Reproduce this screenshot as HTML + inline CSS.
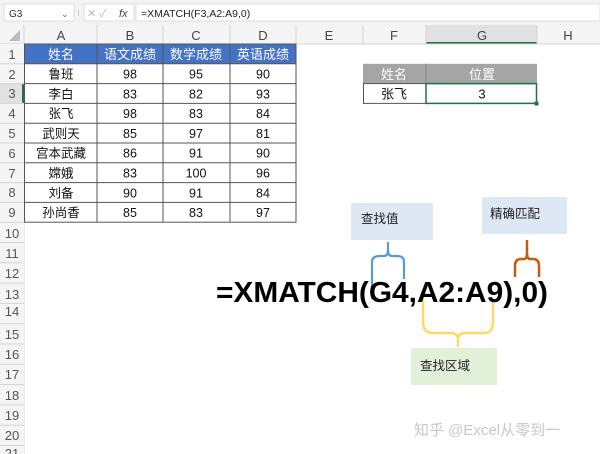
<!DOCTYPE html>
<html><head><meta charset="utf-8"><style>
body{margin:0;width:600px;height:454px;overflow:hidden;background:#fff}
svg{display:block}
text{font-family:"Liberation Sans","Noto Sans CJK SC",sans-serif}
</style></head><body>
<svg width="600" height="454" viewBox="0 0 600 454">
<rect x="0" y="0" width="600" height="25" fill="#f3f3f3"/>
<rect x="4" y="4" width="70" height="17" fill="#fff" stroke="#ddd"/>
<text x="9" y="17" font-size="10" fill="#333">G3</text>
<text x="61" y="17" font-size="9" fill="#666">⌄</text>
<text x="77" y="16" font-size="9" fill="#aaa">⁝</text>
<rect x="84" y="4" width="50" height="17" fill="#fff" stroke="#ddd"/>
<text x="87" y="17" font-size="11" fill="#bbb">✕ ✓</text>
<text x="119" y="17" font-size="11" font-style="italic" fill="#444" font-family="Liberation Serif,serif">fx</text>
<rect x="136" y="4" width="464" height="17" fill="#fff" stroke="#ddd"/>
<text x="141" y="17" font-size="10.5" fill="#222">=XMATCH(F3,A2:A9,0)</text>
<rect x="0" y="25" width="600" height="19" fill="#f5f5f5"/>
<rect x="426" y="25" width="111" height="19" fill="#e1e1e1"/>
<line x1="426" y1="43" x2="537" y2="43" stroke="#217346" stroke-width="2"/>
<line x1="0" y1="44" x2="600" y2="44" stroke="#d4d4d4"/>
<g stroke="#d4d4d4">
<line x1="24" y1="25" x2="24" y2="454"/><line x1="97" y1="25" x2="97" y2="44"/><line x1="163" y1="25" x2="163" y2="44"/><line x1="230" y1="25" x2="230" y2="44"/><line x1="296" y1="25" x2="296" y2="44"/><line x1="363" y1="25" x2="363" y2="44"/><line x1="426" y1="25" x2="426" y2="44"/><line x1="537" y1="25" x2="537" y2="44"/>
</g>
<polygon points="20,30 20,41 9,41" fill="#bbb"/>
<g font-size="13" fill="#444" text-anchor="middle">
<text x="61" y="40">A</text><text x="130" y="40">B</text><text x="196" y="40">C</text><text x="263" y="40">D</text><text x="329" y="40">E</text><text x="394" y="40">F</text><text x="482" y="40">G</text><text x="568" y="40">H</text>
</g>
<rect x="0" y="44" width="24" height="410" fill="#f5f5f5"/>
<rect x="0" y="83.6" width="24" height="19.8" fill="#e1e1e1"/>
<line x1="23" y1="83.6" x2="23" y2="103.4" stroke="#217346" stroke-width="2"/>
<g stroke="#d4d4d4">
<line x1="0" y1="63.8" x2="24" y2="63.8"/><line x1="0" y1="83.6" x2="24" y2="83.6"/><line x1="0" y1="103.4" x2="24" y2="103.4"/><line x1="0" y1="123.2" x2="24" y2="123.2"/><line x1="0" y1="143" x2="24" y2="143"/><line x1="0" y1="162.8" x2="24" y2="162.8"/><line x1="0" y1="182.6" x2="24" y2="182.6"/><line x1="0" y1="202.4" x2="24" y2="202.4"/><line x1="0" y1="222.2" x2="24" y2="222.2"/><line x1="0" y1="242.5" x2="24" y2="242.5"/><line x1="0" y1="262.8" x2="24" y2="262.8"/><line x1="0" y1="283.1" x2="24" y2="283.1"/><line x1="0" y1="303.4" x2="24" y2="303.4"/><line x1="0" y1="323.7" x2="24" y2="323.7"/><line x1="0" y1="344" x2="24" y2="344"/><line x1="0" y1="364.3" x2="24" y2="364.3"/><line x1="0" y1="384.6" x2="24" y2="384.6"/><line x1="0" y1="404.9" x2="24" y2="404.9"/><line x1="0" y1="425.2" x2="24" y2="425.2"/><line x1="0" y1="445.5" x2="24" y2="445.5"/>
</g>
<g font-size="13" fill="#555" text-anchor="middle">
<text x="12" y="59">1</text><text x="12" y="79">2</text><text x="12" y="98">3</text><text x="12" y="118">4</text><text x="12" y="138">5</text><text x="12" y="158">6</text><text x="12" y="178">7</text><text x="12" y="197">8</text><text x="12" y="217">9</text><text x="12" y="238">10</text><text x="12" y="258">11</text><text x="12" y="278">12</text><text x="12" y="299">13</text><text x="12" y="316">14</text><text x="12" y="339">15</text><text x="12" y="359">16</text><text x="12" y="379">17</text><text x="12" y="400">18</text><text x="12" y="420">19</text><text x="12" y="440">20</text><text x="12" y="458">21</text>
</g>
<rect x="24" y="44" width="272" height="19.8" fill="#4472c4"/>
<g stroke="#555" stroke-width="1" fill="none">
<rect x="24.5" y="44" width="271.5" height="178.2"/>
<line x1="97" y1="44" x2="97" y2="222"/><line x1="163" y1="44" x2="163" y2="222"/><line x1="230" y1="44" x2="230" y2="222"/>
<line x1="24" y1="63.8" x2="296" y2="63.8"/><line x1="24" y1="83.6" x2="296" y2="83.6"/><line x1="24" y1="103.4" x2="296" y2="103.4"/><line x1="24" y1="123.2" x2="296" y2="123.2"/><line x1="24" y1="143" x2="296" y2="143"/><line x1="24" y1="162.8" x2="296" y2="162.8"/><line x1="24" y1="182.6" x2="296" y2="182.6"/><line x1="24" y1="202.4" x2="296" y2="202.4"/>
</g>
<g font-size="13" fill="#fff" text-anchor="middle">
<text x="61" y="59">姓名</text><text x="130" y="59">语文成绩</text><text x="196" y="59">数学成绩</text><text x="263" y="59">英语成绩</text>
</g>
<g font-size="12.5" fill="#111" text-anchor="middle">
<text x="61" y="78.5">鲁班</text><text x="130" y="78.5">98</text><text x="196" y="78.5">95</text><text x="263" y="78.5">90</text>
<text x="61" y="98.3">李白</text><text x="130" y="98.3">83</text><text x="196" y="98.3">82</text><text x="263" y="98.3">93</text>
<text x="61" y="118.1">张飞</text><text x="130" y="118.1">98</text><text x="196" y="118.1">83</text><text x="263" y="118.1">84</text>
<text x="61" y="137.9">武则天</text><text x="130" y="137.9">85</text><text x="196" y="137.9">97</text><text x="263" y="137.9">81</text>
<text x="61" y="157.7">宫本武藏</text><text x="130" y="157.7">86</text><text x="196" y="157.7">91</text><text x="263" y="157.7">90</text>
<text x="61" y="177.5">嫦娥</text><text x="130" y="177.5">83</text><text x="196" y="177.5">100</text><text x="263" y="177.5">96</text>
<text x="61" y="197.3">刘备</text><text x="130" y="197.3">90</text><text x="196" y="197.3">91</text><text x="263" y="197.3">84</text>
<text x="61" y="217.1">孙尚香</text><text x="130" y="217.1">85</text><text x="196" y="217.1">83</text><text x="263" y="217.1">97</text>
</g>
<rect x="363" y="63.8" width="174" height="19.8" fill="#a5a5a5"/>
<line x1="426" y1="63.8" x2="426" y2="83.6" stroke="#888"/>
<rect x="363.5" y="83.6" width="173" height="19.8" fill="none" stroke="#555"/>
<rect x="426" y="83.6" width="110.5" height="19.8" fill="none" stroke="#217346" stroke-width="1.5"/>
<rect x="534.5" y="101.5" width="4" height="4" fill="#217346"/>
<g font-size="13" text-anchor="middle">
<text x="394" y="79" fill="#fff">姓名</text><text x="482" y="79" fill="#fff">位置</text>
<text x="394" y="98.5" fill="#111">张飞</text><text x="482" y="98.5" fill="#111">3</text>
</g>
<rect x="351" y="203" width="82" height="37" fill="#dde8f4"/>
<text x="361" y="223" font-size="12.5" fill="#222">查找值</text>
<rect x="482" y="197" width="85" height="37" fill="#dde8f4"/>
<text x="490" y="218" font-size="12.5" fill="#222">精确匹配</text>
<rect x="411" y="348" width="86" height="37" fill="#e2efd9"/>
<text x="420" y="370" font-size="12.5" fill="#222">查找区域</text>
<path d="M372,299 V262 Q372,256 380,256 H384 Q388,256 388,250 V242 V250 Q388,256 392,256 H397 Q404,256 404,262 V279" fill="none" stroke="#5b9bd5" stroke-width="2.2"/>
<path d="M515,277 V266 Q515,259 521,259 H524 Q527,259 527,253 V240 V253 Q527,259 530,259 H533 Q539,259 539,266 V277" fill="none" stroke="#c55a11" stroke-width="2.5"/>
<path d="M423,300 V322 Q423,333 433,333 H451 Q458,333 458,340 V347 V340 Q458,333 465,333 H484 Q493,333 493,322 V300" fill="none" stroke="#ffd966" stroke-width="2.5"/>
<text x="216" y="302" font-size="29" font-weight="bold" fill="#000" textLength="332" lengthAdjust="spacingAndGlyphs" font-family="DejaVu Sans,sans-serif">=XMATCH(G4,A2:A9),0)</text>
<text x="414" y="435" font-size="15" fill="#c8c8c8">知乎 @Excel从零到一</text>
</svg>
</body></html>
